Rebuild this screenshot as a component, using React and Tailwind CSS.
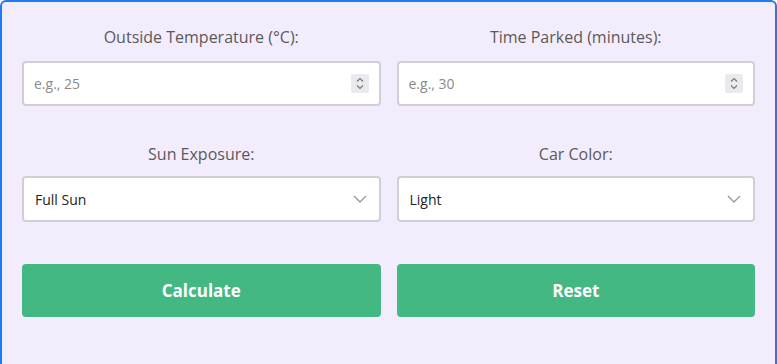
import React, { useState } from 'react';

const font = { fontFamily: '"Open Sans", "Noto Sans", sans-serif' };

const Spinner = () => (
    <div className="w-[18px] h-[19px] bg-[#e9e9ee] rounded-[2px] flex items-center justify-center">
        <svg width="10" height="15" viewBox="0 0 10 15" fill="none" stroke="#7a7a7a" strokeWidth="1.2">
            <path d="M2 5.5 L5 2.5 L8 5.5" />
            <path d="M2 9.5 L5 12.5 L8 9.5" />
        </svg>
    </div>
);

const Chevron = () => (
    <svg width="14" height="8" viewBox="0 0 14 8" fill="none" stroke="#9a9a9a" strokeWidth="1.4">
        <path d="M1 1 L7 7 L13 1" />
    </svg>
);

const NumberField = ({ label, placeholder }) => {
    const [value, setValue] = useState('');
    return (
        <div className="flex flex-col">
            <label className="text-[16px] leading-6 text-[#5a5a5a] text-center mb-[12px]">{label}</label>
            <div className="h-[45px] bg-white border-2 border-[#cfcfd4] rounded-[4px] flex items-center pl-[10px] pr-[10px]">
                <input
                    type="text"
                    value={value}
                    onChange={e => setValue(e.target.value)}
                    placeholder={placeholder}
                    className="flex-1 min-w-0 bg-transparent outline-none text-[14px] text-[#333] placeholder:text-[#8a8a8a]"
                    style={font}
                />
                <Spinner />
            </div>
        </div>
    );
};

const SelectField = ({ label, value, options }) => {
    const [selected, setSelected] = useState(value);
    return (
        <div className="flex flex-col">
            <label className="text-[16px] leading-6 text-[#5a5a5a] text-center mb-[10px]">{label}</label>
            <div className="relative h-[46px] bg-white border-2 border-[#cfcfd4] rounded-[4px]">
                <select
                    value={selected}
                    onChange={e => setSelected(e.target.value)}
                    className="appearance-none w-full h-full bg-transparent outline-none pl-[11px] text-[14px] text-[#222]"
                    style={font}
                >
                    {options.map(o => <option key={o}>{o}</option>)}
                </select>
                <div className="absolute right-[12px] top-[17px] pointer-events-none">
                    <Chevron />
                </div>
            </div>
        </div>
    );
};

export default function App() {
    return (
        <div className="w-[777px] h-[364px] overflow-hidden" style={font}>
            <div className="h-[400px] border-2 border-[#1b7cf3] rounded-[6px] bg-[#f3ecfd] px-[20px] pt-[23px]">
                <div className="grid grid-cols-2 gap-x-[16px]">
                    <NumberField label="Outside Temperature (°C):" placeholder="e.g., 25" />
                    <NumberField label="Time Parked (minutes):" placeholder="e.g., 30" />
                </div>
                <div className="grid grid-cols-2 gap-x-[16px] mt-[36px]">
                    <SelectField label="Sun Exposure:" value="Full Sun" options={['Full Sun', 'Partial Shade', 'Full Shade']} />
                    <SelectField label="Car Color:" value="Light" options={['Light', 'Medium', 'Dark']} />
                </div>
                <div className="grid grid-cols-2 gap-x-[16px] mt-[42px]">
                    <button className="h-[53px] bg-[#43b883] rounded-[4px] text-white font-bold text-[17px]">Calculate</button>
                    <button className="h-[53px] bg-[#43b883] rounded-[4px] text-white font-bold text-[17px]">Reset</button>
                </div>
            </div>
        </div>
    );
}
